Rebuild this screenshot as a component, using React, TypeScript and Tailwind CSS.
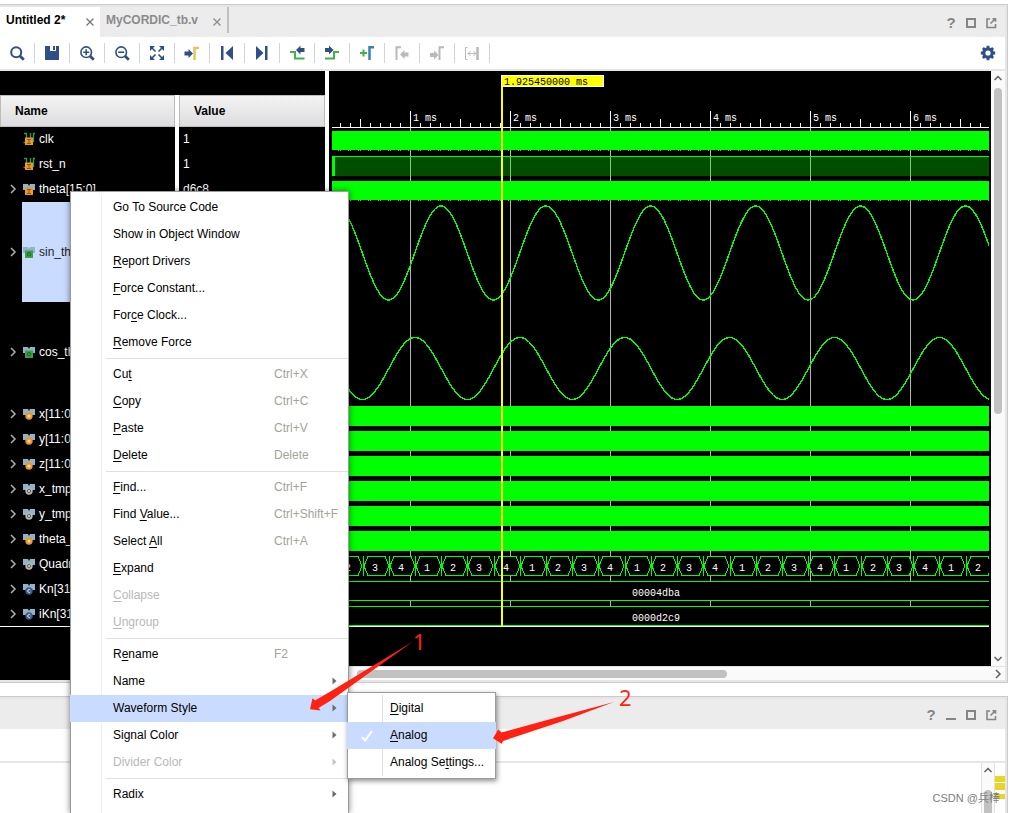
import React, { useEffect, useRef, useState } from 'react'

type SignalKind = 'input' | 'inputBus' | 'output' | 'variable' | 'register' | 'constant'

type Signal = {
  name: string
  value?: string
  kind: SignalKind
  tall?: boolean
  selected?: boolean
}

type MenuEntry = {
  label: string
  hotkey?: number
  shortcut?: string
  submenu?: boolean
  disabled?: boolean
  active?: boolean
}

const signals: Signal[] = [
  { name: 'clk', value: '1', kind: 'input' },
  { name: 'rst_n', value: '1', kind: 'input' },
  { name: 'theta[15:0]', value: 'd6c8', kind: 'inputBus' },
  { name: 'sin_theta', kind: 'output', tall: true, selected: true },
  { name: 'cos_theta', kind: 'output', tall: true },
  { name: 'x[11:0]', kind: 'variable' },
  { name: 'y[11:0]', kind: 'variable' },
  { name: 'z[11:0]', kind: 'variable' },
  { name: 'x_tmp', kind: 'register' },
  { name: 'y_tmp', kind: 'register' },
  { name: 'theta_t', kind: 'variable' },
  { name: 'Quadrant', kind: 'register' },
  { name: 'Kn[31:0]', kind: 'constant' },
  { name: 'iKn[31:0]', kind: 'constant' },
]

const menuGroups: MenuEntry[][] = [
  [
    { label: 'Go To Source Code' },
    { label: 'Show in Object Window' },
    { label: 'Report Drivers', hotkey: 0 },
    { label: 'Force Constant...', hotkey: 0 },
    { label: 'Force Clock...', hotkey: 3 },
    { label: 'Remove Force', hotkey: 0 },
  ],
  [
    { label: 'Cut', hotkey: 2, shortcut: 'Ctrl+X' },
    { label: 'Copy', hotkey: 0, shortcut: 'Ctrl+C' },
    { label: 'Paste', hotkey: 0, shortcut: 'Ctrl+V' },
    { label: 'Delete', hotkey: 0, shortcut: 'Delete' },
  ],
  [
    { label: 'Find...', hotkey: 0, shortcut: 'Ctrl+F' },
    { label: 'Find Value...', hotkey: 5, shortcut: 'Ctrl+Shift+F' },
    { label: 'Select All', hotkey: 7, shortcut: 'Ctrl+A' },
    { label: 'Expand', hotkey: 0 },
    { label: 'Collapse', hotkey: 0, disabled: true },
    { label: 'Ungroup', hotkey: 0, disabled: true },
  ],
  [
    { label: 'Rename', hotkey: 1, shortcut: 'F2' },
    { label: 'Name', submenu: true },
    { label: 'Waveform Style', submenu: true, active: true },
    { label: 'Signal Color', submenu: true },
    { label: 'Divider Color', submenu: true, disabled: true },
  ],
  [{ label: 'Radix', submenu: true }],
]

const styleEntries: MenuEntry[] = [
  { label: 'Digital', hotkey: 0 },
  { label: 'Analog', hotkey: 0, active: true },
  { label: 'Analog Settings...', hotkey: 9 },
]

const BLUE = '#304f87'
const GREEN = '#45b045'
const YELLOW = '#e3c55c'
const GRAY = '#b9b9b9'
const WAVE = '#00ff00'

const arrowRight = (x: number, y: number) =>
  `M${x} ${y - 2}h4v-2.5l4.5 4.5-4.5 4.5v-2.5h-4z`
const arrowLeft = (x: number, y: number) =>
  `M${x} ${y}l4.5-4.5v2.5h4v4h-4v2.5z`

const tools: { label: string; disabled?: boolean; icon: React.ReactNode }[] = [
  {
    label: 'Search',
    icon: (
      <g fill="none" stroke={BLUE} strokeWidth="2">
        <circle cx="7.2" cy="7.2" r="5" />
        <path d="M11 11l3.8 3.8" strokeWidth="2.8" />
      </g>
    ),
  },
  {
    label: 'Save',
    icon: <path d="M1 1h5v5h6V1h3v14H1zM9 1h2v4H9z" fill={BLUE} />,
  },
  {
    label: 'Zoom In',
    icon: (
      <g fill="none" stroke={BLUE} strokeWidth="1.6">
        <circle cx="7.2" cy="7.2" r="5.3" />
        <path d="M4.2 7.2h6M7.2 4.2v6" />
        <path d="M11 11l3.8 3.8" strokeWidth="2.8" />
      </g>
    ),
  },
  {
    label: 'Zoom Out',
    icon: (
      <g fill="none" stroke={BLUE} strokeWidth="1.6">
        <circle cx="7.2" cy="7.2" r="5.3" />
        <path d="M4.2 7.2h6" />
        <path d="M11 11l3.8 3.8" strokeWidth="2.8" />
      </g>
    ),
  },
  {
    label: 'Zoom Fit',
    icon: (
      <g fill={BLUE} stroke={BLUE} strokeWidth="1.6">
        <path d="M1 1h5L1 6zM15 1v5l-5-5zM1 15v-5l5 5zM15 15h-5l5-5z" stroke="none" />
        <path d="M2 2l4.5 4.5M14 2L9.5 6.5M2 14l4.5-4.5M14 14L9.5 9.5" />
      </g>
    ),
  },
  {
    label: 'Go to Time',
    icon: (
      <>
        <path d={arrowRight(0.5, 8.5)} fill={BLUE} />
        <path d="M10.5 15V3H15" fill="none" stroke={YELLOW} strokeWidth="2.5" />
      </>
    ),
  },
  {
    label: 'Go to Start',
    icon: <path d="M2 1h2.5v14H2zM14 1v14L6.5 8z" fill={BLUE} />,
  },
  {
    label: 'Go to End',
    icon: <path d="M11 1h2.5v14H11zM2 1v14l7.5-7z" fill={BLUE} />,
  },
  {
    label: 'Previous Transition',
    icon: (
      <>
        <path d="M1 7h5v6.5h9.5" fill="none" stroke={GREEN} strokeWidth="2" />
        <path d={arrowLeft(7, 5)} fill={BLUE} />
      </>
    ),
  },
  {
    label: 'Next Transition',
    icon: (
      <>
        <path d="M1 13.5h9V7h5" fill="none" stroke={GREEN} strokeWidth="2" />
        <path d={arrowRight(1, 5)} fill={BLUE} />
      </>
    ),
  },
  {
    label: 'Add Marker',
    icon: (
      <>
        <path d="M1 8h7M4.5 4.5v7" stroke={GREEN} strokeWidth="2" />
        <path d="M10.5 15V2.2H15" fill="none" stroke="#3a80b5" strokeWidth="2.5" />
      </>
    ),
  },
  {
    label: 'Previous Marker',
    disabled: true,
    icon: (
      <>
        <path d="M2.5 15V2.2H7" fill="none" stroke={GRAY} strokeWidth="2" />
        <path d={arrowLeft(6, 9.5)} fill={GRAY} />
      </>
    ),
  },
  {
    label: 'Next Marker',
    disabled: true,
    icon: (
      <>
        <path d="M10.5 15V2.2H15" fill="none" stroke={GRAY} strokeWidth="2" />
        <path d={arrowRight(1, 10)} fill={GRAY} />
      </>
    ),
  },
  {
    label: 'Swap Cursors',
    disabled: true,
    icon: (
      <g fill="none" stroke={GRAY}>
        <path d="M3.5 2.5h-2v12h2" />
        <path d="M13.5 2v13" strokeWidth="2.5" />
        <path d="M4 8.5h8M6.5 6L4 8.5 6.5 11M9.5 6L12 8.5 9.5 11" />
      </g>
    ),
  },
]

const badgeColors: Record<SignalKind, string> = {
  input: '#f0952b',
  inputBus: '#f0952b',
  output: '#3f9f45',
  variable: '#f0952b',
  register: '#b5b5b5',
  constant: '#41598a',
}

const SignalIcon: React.FC<{ kind: SignalKind }> = ({ kind }) => {
  const color = badgeColors[kind]
  const square = kind === 'input' || kind === 'inputBus' || kind === 'output'

  return (
    <svg width="12" height="14" viewBox="0 0 12 14" className="shrink-0" aria-hidden="true">
      {kind === 'input' ? (
        <path d="M1 1.5h2.5V7M0.500 10.500H2M7.500 1v7.500M12 1.500h-1.500V10" fill="none" stroke="#2c9c48" strokeWidth="1.4" />
      ) : (
        <path d="M0 2h5l1 2 1-2h5v6H8L6 9 4 8H0z" fill="#8fb4c8" />
      )}
      {square ? (
        <rect x="2" y="5.5" width="8" height="7.5" fill={color} />
      ) : (
        <circle cx="6" cy="9" r="3.7" fill={color} />
      )}
      {(kind === 'input' || kind === 'inputBus') && (
        <path d="M4 7.5h4M4 11.5h4M6 7.5v4" stroke="#7d5a30" fill="none" />
      )}
      {kind === 'output' && <circle cx="6" cy="9.3" r="1.7" fill="none" stroke="#1c5c28" />}
      {kind === 'variable' && <circle cx="6" cy="9" r="1.5" fill="#ffe2b0" />}
      {kind === 'register' && <circle cx="6" cy="9" r="1.5" fill="#eee" stroke="#555" />}
      {kind === 'constant' && <path d="M7.3 8a1.5 1.5 0 1 0 0 2" fill="none" stroke="#dde6f5" />}
    </svg>
  )
}

const Chevron: React.FC<{ d: string; color?: string }> = ({ d, color = '#606060' }) => (
  <svg width="10" height="10" viewBox="0 0 10 10" className="shrink-0" aria-hidden="true">
    <path d={d} fill="none" stroke={color} strokeWidth="1.5" />
  </svg>
)

const CHEVRON_UP = 'M1.5 7L5 3.5 8.5 7'
const CHEVRON_DOWN = 'M1.5 3L5 6.5 8.5 3'
const CHEVRON_RIGHT = 'M3 1l4 4-4 4'

const WindowButtons: React.FC<{ minimize?: boolean }> = ({ minimize }) => (
  <div className="ml-auto flex items-center gap-2 pt-0.5 pr-2 text-[#858585]">
    <button aria-label="Help" className="w-3 text-center text-[15px] leading-4 font-bold">
      ?
    </button>
    {minimize && (
      <button aria-label="Minimize" className="h-3 w-3">
        <svg width="12" height="12" viewBox="0 0 12 12">
          <path d="M1 10h10" stroke="currentColor" strokeWidth="2" />
        </svg>
      </button>
    )}
    <button aria-label="Maximize" className="h-3 w-3">
      <svg width="12" height="12" viewBox="0 0 12 12">
        <rect x="2" y="2" width="8" height="8" fill="none" stroke="currentColor" strokeWidth="2" />
      </svg>
    </button>
    <button aria-label="Float" className="h-3 w-3">
      <svg width="12" height="12" viewBox="0 0 12 12" fill="none" stroke="currentColor" strokeWidth="1.6">
        <path d="M5 2H2v8.5h8.5V7M5.5 6.5L10 2M7.5 1.8h3v3" />
      </svg>
    </button>
  </div>
)

const CloseIcon: React.FC = () => (
  <svg width="8" height="8" viewBox="0 0 8 8" stroke="currentColor" strokeWidth="1.3">
    <path d="M0.5 0.5l7 7M7.5 0.5l-7 7" />
  </svg>
)

const MenuLabel: React.FC<{ entry: MenuEntry }> = ({ entry }) => {
  const { label, hotkey } = entry
  if (hotkey === undefined) return <span>{label}</span>

  return (
    <span>
      {label.slice(0, hotkey)}
      <span className="underline underline-offset-2">{label[hotkey]}</span>
      {label.slice(hotkey + 1)}
    </span>
  )
}

const SignalTable: React.FC = () => (
  <div className="w-[325px] shrink-0 bg-black pt-6">
    <table className="w-full table-fixed border-separate border-spacing-0 text-left text-white">
      <thead>
        <tr className="text-black">
          <th className="h-8 w-[179px] border-r-4 border-white p-0">
            <div className="flex h-8 items-center border border-[#bcbcbc] bg-linear-to-b from-[#f3f3f3] to-[#dddddf] pl-3.5">
              Name
            </div>
          </th>
          <th className="h-8 p-0">
            <div className="flex h-8 items-center border border-[#bcbcbc] bg-linear-to-b from-[#f3f3f3] to-[#dddddf] pl-3.5">
              Value
            </div>
          </th>
        </tr>
      </thead>
      <tbody>
        {signals.map((signal, i) => (
          <tr key={signal.name} className={signal.tall ? 'h-[100px]' : 'h-[25px]'}>
            <td
              className={`border-r-4 border-r-white p-0 align-top ${i === signals.length - 1 ? 'border-b border-b-white' : ''}`}
            >
              <div className={`flex items-center ${signal.tall ? 'h-[100px]' : 'h-6'}`}>
                <span className="flex w-[22px] shrink-0 pl-2">
                  {signal.kind !== 'input' && <Chevron d={CHEVRON_RIGHT} color="#b0b0b0" />}
                </span>
                <span
                  className={`flex h-full flex-1 items-center gap-1 pl-px ${signal.selected ? 'bg-[#c9dcff] text-[#222]' : ''}`}
                >
                  <SignalIcon kind={signal.kind} />
                  {signal.name}
                </span>
              </div>
            </td>
            <td className="p-0 pb-0.5 pl-1">{signal.value}</td>
          </tr>
        ))}
      </tbody>
    </table>
  </div>
)

// Everything below is in pixels of the wave canvas, 100px per millisecond.
const MS = 100
const FIRST_MS = 78
const PHASE = 26.22

const sine = (width: number, peak: number, mid: number, amp: number) => {
  const points: string[] = []
  for (let x = 0; x <= width; x += 1) {
    const y = mid - amp * Math.cos((2 * Math.PI * (x - peak)) / 104.9)
    points.push(`${x},${y.toFixed(1)}`)
  }
  return points.join(' ')
}

const WaveCanvas: React.FC = () => {
  const box = useRef<HTMLDivElement>(null)
  const [width, setWidth] = useState(600)

  useEffect(() => {
    if (!box.current) return
    const observer = new ResizeObserver(entries => setWidth(entries[0].contentRect.width))
    observer.observe(box.current)
    return () => observer.disconnect()
  }, [])

  const ticks = Array.from({ length: Math.ceil((width - 8) / 10) }, (_, i) => 8 + i * 10)
  const majors = ticks.filter(x => (x - FIRST_MS) % MS === 0)
  const phases = Array.from({ length: Math.ceil((width - 44) / PHASE) + 1 }, (_, i) => i - 1)

  return (
    <div className="bg-black pr-0.5 pl-[3px] font-['Liberation_Mono',monospace] text-[10px]">
      <div ref={box}>
        <svg width="100%" height="595" className="block" shapeRendering="crispEdges">
          {ticks.map(x => {
            const height = (x - FIRST_MS) % MS === 0 ? 16 : (x - FIRST_MS) % 50 === 0 ? 8 : 4
            return <rect key={x} x={x} y={56 - height} width="1" height={height} fill="#fff" />
          })}
          <rect x="0" y="56" width="100%" height="1" fill="#fff" />
          {majors.map((x, i) => (
            <g key={x}>
              <rect x={x} y="57" width="1" height="498" fill="#b4b4b4" />
              {x + 30 < width && (
                <text x={x + 3} y="50" fill="#fff">
                  {i + 1} ms
                </text>
              )}
            </g>
          ))}

          {[60, 110].map(y => (
            <g key={y}>
              <rect y={y} width="100%" height="19" fill={WAVE} />
              <path d={`M6 ${y + 19.5}H${width}`} stroke={WAVE} strokeDasharray="1 1 1 7" />
            </g>
          ))}

          <rect y="85" width="100%" height="20" fill={WAVE} fillOpacity="0.3" />
          <rect y="85" width="100%" height="1" fill={WAVE} />
          <rect y="85" width="3" height="20" fill={WAVE} />

          <g fill="none" stroke={WAVE} strokeWidth="1.4">
            <polyline points={sine(width, 109, 182, 47)} />
            <polyline points={sine(width, 83, 297.5, 31)} />
          </g>

          {[335, 360, 385, 410, 435, 460].map(y => (
            <rect key={y} y={y} width="100%" height="20" fill={WAVE} />
          ))}

          {phases.map(n => {
            const x = Math.round(30.5 + n * PHASE)
            return (
              <g key={n}>
                <path
                  d={`M${x + 1} 495l4-9.5h17l4 9.5-4 9.5h-17z`}
                  fill="#000"
                  stroke={WAVE}
                />
                <rect x={x} y="485" width="1" height="20" fill={WAVE} />
                <text x={x + 9} y="500" fill="#fff">
                  {((n + 6) % 4) + 1}
                </text>
              </g>
            )
          })}

          {[
            { y: 510, text: '00004dba' },
            { y: 535, text: '0000d2c9' },
          ].map(bus => (
            <g key={bus.text}>
              <rect y={bus.y} width="100%" height="20" fill="#000" />
              <rect y={bus.y} width="100%" height="1" fill={WAVE} />
              <rect y={bus.y + 19} width="100%" height="1" fill={WAVE} />
              <text x="324" y={bus.y + 15} textAnchor="middle" fill="#fff">
                {bus.text}
              </text>
            </g>
          ))}
          <rect y="555" width="100%" height="1" fill="#fff" />

          <rect x="169" y="5" width="2" height="551" fill="#ffff00" />
          <rect x="169.5" y="4.5" width="102" height="11" fill="#ffff00" stroke="#fff" />
          <text x="172" y="14" fill="#000">
            1.925450000 ms
          </text>
        </svg>
      </div>
    </div>
  )
}

const WaveformPanel: React.FC = () => (
  <section className="border-t border-r border-b border-[#cbcbcb] bg-[#e6e6e6] pt-0.5 pr-0.5 pb-0.5">
    <div className="flex h-[30px] bg-[#ececec] font-bold">
      <div className="flex w-[100px] items-center justify-between bg-white pr-1.5 pb-1 pl-1.5">
        <a href="#untitled">Untitled 2*</a>
        <button aria-label="Close Untitled 2" className="mt-1 w-2 leading-3 text-[#777]">
          <CloseIcon />
        </button>
      </div>
      <div className="flex h-[26px] w-[129px] items-center justify-between border-r-2 border-[#bfbfbf] pr-1.5 pl-1.5 text-[#8b8b8b]">
        <a href="#mycordic">MyCORDIC_tb.v</a>
        <button aria-label="Close MyCORDIC_tb.v" className="mt-1 w-2 leading-3">
          <CloseIcon />
        </button>
      </div>
      <WindowButtons />
    </div>

    <div className="mb-0.5 flex h-8 items-center bg-white">
      {tools.map(tool => (
        <button
          key={tool.label}
          aria-label={tool.label}
          disabled={tool.disabled}
          className="flex h-5 w-[35px] items-center justify-center border-r border-[#d4d4d4]"
        >
          <svg width="16" height="16" viewBox="0 0 16 16">
            {tool.icon}
          </svg>
        </button>
      ))}
      <button aria-label="Settings" className="mr-[9px] ml-auto">
        <svg width="16" height="16" viewBox="0 0 16 16" fill="none" stroke={BLUE} className="block">
          <circle cx="8" cy="8" r="4.2" strokeWidth="3.2" />
          <path
            d="M8 0.8v3M8 12.2v3M0.8 8h3M12.2 8h3M2.9 2.9l2 2M11.1 11.1l2 2M2.9 13.1l2-2M11.1 4.9l2-2"
            strokeWidth="2.8"
          />
        </svg>
      </button>
    </div>

    <div className="flex bg-white">
      <SignalTable />
      <div className="ml-1 flex min-w-0 flex-1 flex-col">
        <div className="flex">
          <div className="min-w-0 flex-1">
            <WaveCanvas />
          </div>
          <div className="flex w-3.5 flex-col items-center bg-[#fafafa] pt-0.5 pb-0.5">
            <Chevron d={CHEVRON_UP} />
            <div className="mt-[5px] h-[326px] w-2 rounded-full bg-[#c1c1c1]" />
            <div className="mt-auto">
              <Chevron d={CHEVRON_DOWN} />
            </div>
          </div>
        </div>
        <div className="flex h-3.5 items-center border-t border-[#e2e2e2] bg-[#fafafa] pr-0.5 pl-7">
          <div className="h-2 w-[370px] rounded-full bg-[#c1c1c1]" />
          <div className="ml-auto">
            <Chevron d={CHEVRON_RIGHT} />
          </div>
        </div>
      </div>
    </div>
  </section>
)

const ConsolePanel: React.FC = () => (
  <section className="mt-[13px] flex min-h-0 flex-1 flex-col border-t border-r border-[#cbcbcb] bg-[#e6e6e6] pt-0.5 pr-0.5">
    <div className="flex h-[30px] shrink-0 items-center bg-[#ececec]">
      <WindowButtons minimize />
    </div>
    <div className="mb-0.5 h-8 shrink-0 bg-white" />
    <div className="flex min-h-0 flex-1 justify-end bg-white">
      <div className="flex w-3.5 flex-col items-center overflow-hidden border-x border-[#e2e2e2] bg-[#fafafa] pt-0.5">
        <Chevron d={CHEVRON_UP} />
        <div className="mt-[15px] w-2 flex-1 rounded-t-full bg-[#c1c1c1]" />
      </div>
      <div className="w-2.5 pt-[13px]">
        <div className="h-1.5 bg-[#e8d526]" />
        <div className="mt-px h-[7px] bg-[#e8d526]" />
        <div className="mt-1 h-[5px] bg-[#e8d526]" />
      </div>
    </div>
  </section>
)

const ContextMenu: React.FC = () => (
  <div
    role="menu"
    className="absolute top-[191px] bottom-0 left-[70px] w-[279px] border-x border-t border-[#9c9c9c] bg-white pt-0.5 shadow-[0_0_6px_rgba(0,0,0,0.5)]"
  >
    <div className="h-full bg-linear-to-r from-transparent from-[30px] via-[#e0e0e0] via-[30px] to-transparent to-[31px]">
      {menuGroups.map((group, i) => (
        <React.Fragment key={group[0].label}>
          {i > 0 && <hr className="my-0.5 ml-[35px] border-[#e0e0e0]" />}
          {group.map(entry => (
            <button
              key={entry.label}
              role="menuitem"
              disabled={entry.disabled}
              className={`-mx-px flex h-[27px] w-[279px] items-center pb-0.5 pl-[43px] text-left ${entry.active ? 'bg-[#c9dcff]' : ''} ${entry.disabled ? 'text-[#b8b8b8]' : 'text-black'}`}
            >
              <span className="w-[161px]">
                <MenuLabel entry={entry} />
              </span>
              <span className="text-[#a3a399]">{entry.shortcut}</span>
              {entry.submenu && (
                <svg width="5" height="8" viewBox="0 0 5 8" className="mr-3 ml-auto" aria-hidden="true">
                  <path d="M0.5 0.5v7L4.5 4z" fill={entry.disabled ? '#c4c4c4' : '#6b6b6b'} />
                </svg>
              )}
            </button>
          ))}
        </React.Fragment>
      ))}
    </div>
  </div>
)

const StyleMenu: React.FC = () => (
  <div
    role="menu"
    className="absolute top-[692px] left-[347px] w-[149px] border border-[#9c9c9c] bg-white py-0.5 shadow-[1px_2px_5px_rgba(0,0,0,0.45)]"
  >
    {styleEntries.map(entry => (
      <button
        key={entry.label}
        role="menuitem"
        className={`-mx-px flex h-[27px] w-[149px] items-center text-left ${entry.active ? 'bg-[#c9dcff]' : ''}`}
      >
        <span
          className={`mr-[7px] flex h-full w-9 items-center justify-center border-r ${entry.active ? 'border-transparent' : 'border-[#e0e0e0]'}`}
        >
          {entry.active && (
            <svg width="12" height="12" viewBox="0 0 12 12" className="ml-1">
              <path d="M1 7l3 3.5L11 1" fill="none" stroke="#fff" strokeWidth="2" />
            </svg>
          )}
        </span>
        <span className="pb-0.5">
          <MenuLabel entry={entry} />
        </span>
      </button>
    ))}
  </div>
)

const Annotations: React.FC = () => (
  <svg
    className="pointer-events-none absolute inset-0 h-full w-full font-['Noto_Sans',sans-serif] text-[22px]"
    fill="#ff2212"
  >
    <path d="M310 709.3L312.500 698.3 315 700.5 330 691.7 413 641.6 330 701 318.5 708 320.7 710.5z" />
    <path d="M493 738.3L498.3 729.3 501.5 732.5 560 716.5 614 702 563 721 503 741 501.7 743.7z" />
    <text x="413" y="650">
      1
    </text>
    <text x="619" y="706">
      2
    </text>
  </svg>
)

const App: React.FC = () => (
  <main className="relative flex h-screen flex-col overflow-hidden bg-white pt-1 pr-[7px] font-['Liberation_Sans',Arial,sans-serif] text-xs text-black">
    <WaveformPanel />
    <ConsolePanel />
    <ContextMenu />
    <StyleMenu />
    <Annotations />
    <p className="absolute right-[15px] bottom-[7px] font-['Liberation_Sans','Noto_Sans_CJK_SC',sans-serif] text-[11px] text-[#7d7d7d]">
      CSDN @兵棒
    </p>
  </main>
)

export default App
